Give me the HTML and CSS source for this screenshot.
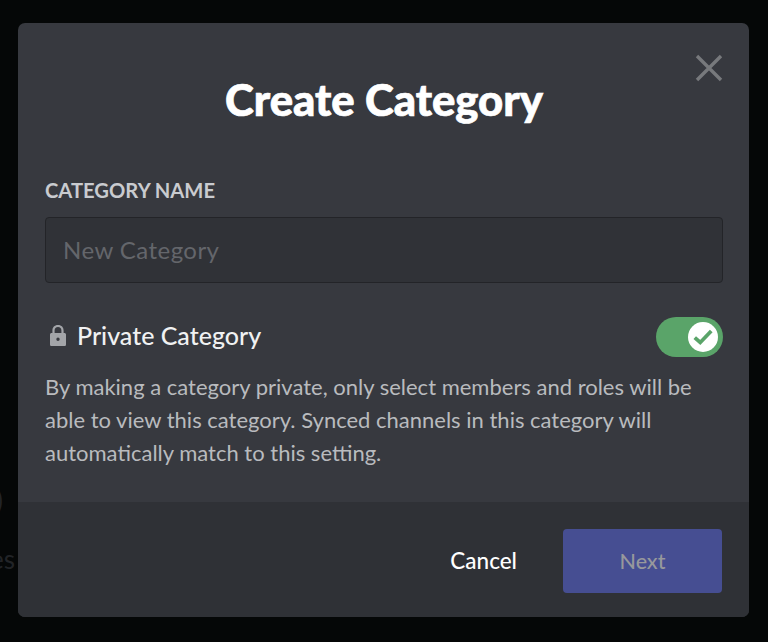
FILE: index.html
```html
<!DOCTYPE html>
<html lang="en">
<head>
    <meta charset="UTF-8">
    <meta name="viewport" content="width=device-width, initial-scale=1.0">
    <title>Create Category</title>
    <link rel="stylesheet" href="styles.css">
</head>
<body>

<div class="backdrop-text backdrop-paren">)</div>
<div class="backdrop-text backdrop-es">es</div>

<div class="modal">
    <div class="modal-body">
        <button class="close-btn" aria-label="Close">
            <svg width="28" height="28" viewBox="0 0 28 28">
                <path d="M2 2 L26 26 M26 2 L2 26" stroke="#77797c" stroke-width="3.4" fill="none"/>
            </svg>
        </button>
        <h1 class="modal-title">Create Category</h1>

        <label class="field-label">CATEGORY NAME</label>
        <div class="field-input">New Category</div>

        <div class="private-row">
            <div class="private-name">
                <svg class="lock" width="16" height="21" viewBox="0 0 16 21">
                    <path fill="#a3a5a9" fill-rule="evenodd" d="M8 0 C4.4 0 2.4 2.4 2.4 5.6 V8 H1.6 C.7 8 0 8.700 0 9.600 V19.400 C0 20.300 .7 21 1.600 21 H14.400 C15.300 21 16 20.300 16 19.400 V9.600 C16 8.700 15.300 8 14.400 8 H13.600 V5.600 C13.600 2.400 11.600 0 8 0 Z M4.600 8 V5.600 C4.600 3.500 5.800 2.100 8 2.100 C10.200 2.100 11.400 3.500 11.400 5.600 V8 Z M8 12.600 A1.700 1.700 0 1 1 8 16 A1.700 1.700 0 1 1 8 12.600 Z"/>
                </svg>
                <span>Private Category</span>
            </div>
            <div class="toggle">
                <div class="toggle-knob">
                    <svg width="22" height="18" viewBox="0 0 20 16">
                        <path d="M2.500 8.500 L7.500 13 L17.500 2.500" stroke="#5aa469" stroke-width="3.400" fill="none"/>
                    </svg>
                </div>
            </div>
        </div>

        <p class="private-note">By making a category private, only select members and roles will be able to view this category. Synced channels in this category will automatically match to this setting.</p>
    </div>

    <div class="modal-footer">
        <button class="cancel-btn">Cancel</button>
        <button class="next-btn">Next</button>
    </div>
</div>

</body>
</html>
```

FILE: styles.css
```css
body {
    margin: 0;
    height: 642px;
    overflow: hidden;
    background-color: #050707;
    font-family: 'Lato', 'Noto Sans', sans-serif;
    display: flex;
    align-items: flex-start;
    justify-content: flex-start;
    padding: 23px 0 0 18px;
    box-sizing: border-box;
}

.backdrop-text {
    position: absolute;
    color: #222427;
    font-size: 26px;
}

.backdrop-paren {
    top: 484px;
    left: -4px;
}

.backdrop-es {
    top: 543px;
    left: -10px;
}

.modal {
    position: relative;
    width: 731px;
    height: 594px;
    background-color: #37393f;
    border-radius: 7px;
    overflow: hidden;
    display: flex;
    flex-direction: column;
}

.modal-body {
    flex: 1;
    padding: 52px 26px 0 27px;
}

.close-btn {
    position: absolute;
    top: 31px;
    right: 26px;
    width: 28px;
    height: 28px;
    padding: 0;
    border: none;
    background: none;
    line-height: 0;
}

.modal-title {
    margin: 0;
    color: #fff;
    font-family: 'Lato', sans-serif;
    font-weight: 900;
    font-size: 43.6px;
    line-height: 48px;
    text-align: center;
    -webkit-text-stroke: 0.7px #fff;
}

.field-label {
    display: block;
    margin-top: 55px;
    color: #c9cbcf;
    font-weight: 700;
    font-size: 20.2px;
    line-height: 24px;
}

.field-input {
    margin-top: 15px;
    height: 66px;
    box-sizing: border-box;
    padding: 0 17px;
    background-color: #303237;
    border: 1px solid #232428;
    border-radius: 4px;
    color: #64666b;
    font-size: 24px;
    letter-spacing: 0.45px;
    line-height: 64px;
}

.private-row {
    display: flex;
    align-items: center;
    justify-content: space-between;
    margin-top: 34px;
    height: 40px;
}

.private-name {
    display: flex;
    align-items: center;
    gap: 11px;
    margin-left: 5px;
    margin-bottom: 4px;
    color: #f0f1f2;
    font-size: 25px;
    font-weight: 500;
}

.toggle {
    width: 67px;
    height: 40px;
    border-radius: 20px;
    background-color: #5aa469;
    display: flex;
    align-items: center;
    justify-content: flex-end;
    padding-right: 5px;
    box-sizing: border-box;
}

.toggle-knob {
    width: 30px;
    height: 30px;
    border-radius: 50%;
    background-color: #fff;
    display: flex;
    align-items: center;
    justify-content: center;
}

.private-note {
    margin: 13px 0 0;
    color: #b9bbbe;
    font-size: 22px;
    line-height: 33px;
}

.modal-footer {
    height: 115px;
    box-sizing: border-box;
    background-color: #2f3136;
    display: flex;
    align-items: center;
    justify-content: flex-end;
    padding: 2px 27px 0 0;
    gap: 46px;
}

.cancel-btn {
    padding: 0;
    border: none;
    background: none;
    color: #fff;
    font-family: inherit;
    font-size: 22.5px;
    font-weight: 500;
}

.next-btn {
    width: 159px;
    height: 64px;
    border: none;
    border-radius: 4px;
    background-color: #464e92;
    color: #97989c;
    font-family: inherit;
    font-size: 21.5px;
    font-weight: 500;
}
```
